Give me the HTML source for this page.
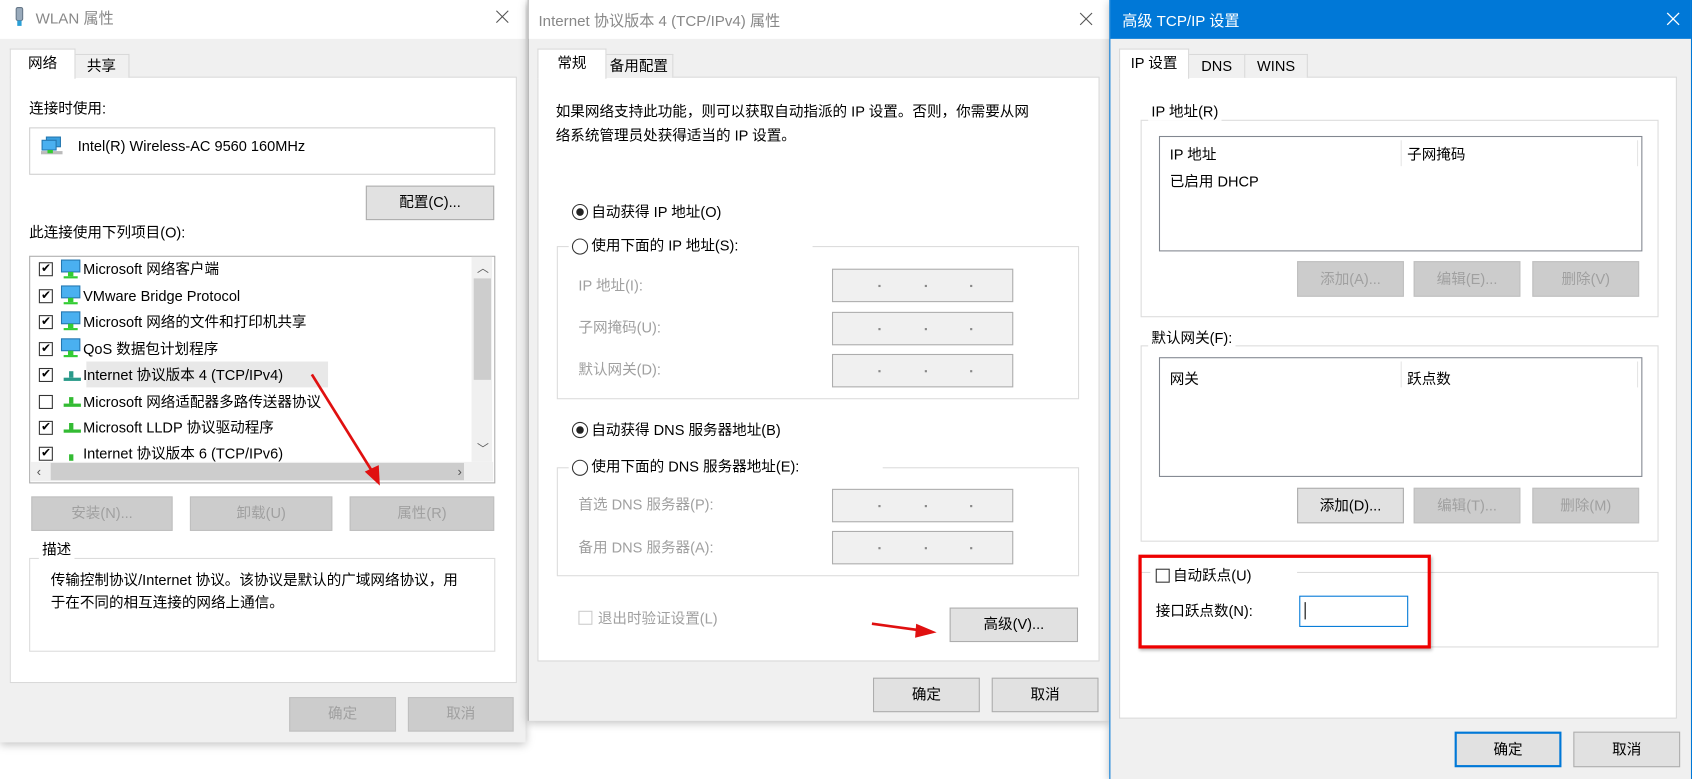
<!DOCTYPE html>
<html><head><meta charset="utf-8">
<style>
html,body{margin:0;padding:0;background:#fff;width:1692px;height:779px;overflow:hidden}
#f{position:absolute;left:0;top:0;width:1568px;height:722px;transform:scale(1.0791);transform-origin:0 0;font-family:"Liberation Sans","Noto Sans CJK SC",sans-serif;font-size:13.5px;color:#000}
.a{position:absolute}
.t{position:absolute;white-space:nowrap;line-height:16px;margin-top:-8px}
.g{color:#a0a0a0}
.dlg{position:absolute;background:#f0f0f0;box-shadow:0 2px 8px rgba(0,0,0,.25)}
.tb{position:absolute;left:0;right:0;top:0;height:36px;background:#fff}
.panel{position:absolute;background:#fff;border:1px solid #d9d9d9}
.tab{position:absolute;background:#f0f0f0;border:1px solid #d9d9d9;border-bottom:none;text-align:center;line-height:22px}
.tab.s{background:#fff;z-index:2;line-height:26px}
.btn{position:absolute;background:#e1e1e1;border:1px solid #adadad;text-align:center;box-sizing:border-box}
.btn.d{background:#cccccc;border-color:#bfbfbf;color:#a0a0a0}
.fs{position:absolute;border:1px solid #dcdcdc}
.lg{position:absolute;background:#fff;padding:0 3px;white-space:nowrap;line-height:16px}
.box{position:absolute;background:#fff;border:1px solid #828790}
.ip{position:absolute;background:#f0f0f0;border:1px solid #adadad;box-sizing:border-box}
.ip i{position:absolute;top:14px;width:2px;height:2px;background:#888}
.cb{position:absolute;width:11px;height:11px;border:1px solid #333;background:#fff}
.rd{position:absolute;width:13px;height:13px;border:1px solid #333;border-radius:50%;background:#fff}
.rd.on:after{content:"";position:absolute;left:3px;top:3px;width:7px;height:7px;border-radius:50%;background:#222}
.x{position:absolute}
</style></head><body><div id="f">

<!-- LEFT DIALOG -->
<div class="dlg" style="left:0;top:0;width:487px;height:688px">
 <div class="tb"></div>
 <svg class="a" style="left:13px;top:6px" width="10" height="20" viewBox="0 0 10 20"><rect x="2" y="1" width="6" height="12" rx="1.5" fill="#9ab" stroke="#678"/><rect x="3" y="13" width="4" height="5" fill="#2a9fd6"/></svg>
 <div class="t g" style="left:33px;top:17px;color:#888;font-size:14px">WLAN 属性</div>
 <svg class="x" style="left:459px;top:9px" width="13" height="13"><path d="M1 1L12 12M12 1L1 12" stroke="#555" stroke-width="1"/></svg>
 <div class="panel" style="left:9px;top:71px;width:468px;height:560px"></div>
 <div class="tab s" style="left:9px;top:45px;width:59px;height:27px">网络</div>
 <div class="tab" style="left:68px;top:50px;width:50px;height:21px">共享</div>
 <div class="t" style="left:27px;top:101px">连接时使用:</div>
 <div class="a" style="left:27px;top:118px;width:430px;height:42px;background:#fff;border:1px solid #d0d0d0"></div>
 <svg class="a" style="left:38px;top:126px" width="20" height="18" viewBox="0 0 20 18"><rect x="5" y="1" width="13" height="9" fill="#3aa0e0" stroke="#2477b0"/><rect x="1" y="4" width="13" height="9" fill="#4ab0f0" stroke="#2477b0"/><rect x="0" y="14" width="20" height="3" fill="#bbb"/><rect x="6" y="13" width="5" height="3" fill="#3c3"/></svg>
 <div class="t" style="left:72px;top:136px">Intel(R) Wireless-AC 9560 160MHz</div>
 <div class="btn" style="left:339px;top:172px;width:119px;height:32px;line-height:30px">配置(C)...</div>
 <div class="t" style="left:27px;top:216px">此连接使用下列项目(O):</div>
 <div class="box" style="left:27px;top:237px;width:430px;height:209px;border-color:#adadad"></div>
 <div class="a" style="left:80px;top:335px;width:224px;height:24px;background:#e8e8e8"></div>
 <div class="cb" style="left:36px;top:243px"></div><div class="t" style="left:38px;top:249px;font-size:11px">✔</div>
 <div class="cb" style="left:36px;top:268px"></div><div class="t" style="left:38px;top:274px;font-size:11px">✔</div>
 <div class="cb" style="left:36px;top:292px"></div><div class="t" style="left:38px;top:298px;font-size:11px">✔</div>
 <div class="cb" style="left:36px;top:317px"></div><div class="t" style="left:38px;top:323px;font-size:11px">✔</div>
 <div class="cb" style="left:36px;top:341px"></div><div class="t" style="left:38px;top:347px;font-size:11px">✔</div>
 <div class="cb" style="left:36px;top:366px"></div>
 <div class="cb" style="left:36px;top:390px"></div><div class="t" style="left:38px;top:396px;font-size:11px">✔</div>
 <div class="cb" style="left:36px;top:414px"></div><div class="t" style="left:38px;top:420px;font-size:11px">✔</div>
 <svg class="a" style="left:56px;top:240px" width="20" height="96" viewBox="0 0 20 96">
  <g id="mon"><rect x="1" y="1" width="17" height="11" fill="#4ab0f0" stroke="#2477b0"/><rect x="7" y="12" width="5" height="4" fill="#3c3"/><rect x="3" y="16" width="13" height="2" fill="#3c3"/></g>
  <use href="#mon" y="24"/><use href="#mon" y="48"/><use href="#mon" y="73"/></svg>
 <svg class="a" style="left:58px;top:340px" width="18" height="90" viewBox="0 0 18 90">
  <rect x="6" y="4" width="4" height="6" fill="#2a9a8a"/><rect x="1" y="10" width="16" height="3" fill="#2a9a8a"/>
  <rect x="6" y="28" width="4" height="6" fill="#3b3"/><rect x="1" y="34" width="16" height="3" fill="#3b3"/>
  <rect x="6" y="52" width="4" height="6" fill="#3b3"/><rect x="1" y="58" width="16" height="3" fill="#3b3"/>
  <rect x="6" y="81" width="4" height="6" fill="#3b3"/></svg>
 <div class="t" style="left:77px;top:250px">Microsoft 网络客户端</div>
 <div class="t" style="left:77px;top:275px">VMware Bridge Protocol</div>
 <div class="t" style="left:77px;top:299px">Microsoft 网络的文件和打印机共享</div>
 <div class="t" style="left:77px;top:324px">QoS 数据包计划程序</div>
 <div class="t" style="left:77px;top:348px">Internet 协议版本 4 (TCP/IPv4)</div>
 <div class="t" style="left:77px;top:373px">Microsoft 网络适配器多路传送器协议</div>
 <div class="t" style="left:77px;top:397px">Microsoft LLDP 协议驱动程序</div>
 <div class="t" style="left:77px;top:421px">Internet 协议版本 6 (TCP/IPv6)</div>
 <div class="a" style="left:437px;top:238px;width:19px;height:190px;background:#f0f0f0"></div>
 <div class="a" style="left:439px;top:258px;width:16px;height:94px;background:#cdcdcd"></div>
 <div class="t" style="left:442px;top:249px;font-size:11px;color:#555">︿</div>
 <div class="t" style="left:442px;top:417px;font-size:11px;color:#555">﹀</div>
 <div class="a" style="left:28px;top:428px;width:429px;height:18px;background:#f0f0f0"></div>
 <div class="a" style="left:47px;top:429px;width:383px;height:16px;background:#cdcdcd"></div>
 <div class="t" style="left:34px;top:437px;font-size:12px;color:#555">‹</div>
 <div class="t" style="left:424px;top:437px;font-size:12px;color:#555">›</div>
 <div class="btn d" style="left:29px;top:460px;width:131px;height:32px;line-height:30px">安装(N)...</div>
 <div class="btn d" style="left:176px;top:460px;width:132px;height:32px;line-height:30px">卸载(U)</div>
 <div class="btn d" style="left:324px;top:460px;width:134px;height:32px;line-height:30px">属性(R)</div>
 <div class="fs" style="left:27px;top:517px;width:430px;height:85px"></div>
 <div class="lg" style="left:36px;top:502px">描述</div>
 <div class="t" style="left:47px;top:538px">传输控制协议/Internet 协议。该协议是默认的广域网络协议，用</div>
 <div class="t" style="left:47px;top:559px">于在不同的相互连接的网络上通信。</div>
 <div class="btn d" style="left:268px;top:646px;width:99px;height:32px;line-height:30px">确定</div>
 <div class="btn d" style="left:378px;top:646px;width:98px;height:32px;line-height:30px">取消</div>
</div>

<!-- MIDDLE DIALOG -->
<div class="dlg" style="left:489px;top:0;width:538px;height:668px;border-left:1px solid #aaa">
 <div class="tb"></div>
 <div class="t" style="left:9px;top:19px;color:#888;font-size:14px">Internet 协议版本 4 (TCP/IPv4) 属性</div>
 <svg class="x" style="left:510px;top:11px" width="13" height="13"><path d="M1 1L12 12M12 1L1 12" stroke="#555" stroke-width="1"/></svg>
 <div class="panel" style="left:8px;top:71px;width:519px;height:540px"></div>
 <div class="tab s" style="left:8px;top:45px;width:62px;height:27px">常规</div>
 <div class="tab" style="left:70px;top:50px;width:62px;height:21px">备用配置</div>
 <div class="t" style="left:25px;top:104px">如果网络支持此功能，则可以获取自动指派的 IP 设置。否则，你需要从网</div>
 <div class="t" style="left:25px;top:126px">络系统管理员处获得适当的 IP 设置。</div>
 <div class="rd on" style="left:40px;top:189px"></div>
 <div class="t" style="left:58px;top:197px">自动获得 IP 地址(O)</div>
 <div class="fs" style="left:26px;top:228px;width:482px;height:140px"></div>
 <div class="lg" style="left:37px;top:219px;padding-left:3px;width:220px;height:18px"></div>
 <div class="rd" style="left:40px;top:221px"></div>
 <div class="t" style="left:58px;top:228px">使用下面的 IP 地址(S):</div>
 <div class="t g" style="left:46px;top:265px">IP 地址(I):</div>
 <div class="t g" style="left:46px;top:304px">子网掩码(U):</div>
 <div class="t g" style="left:46px;top:343px">默认网关(D):</div>
 <div class="ip" style="left:281px;top:249px;width:168px;height:31px"><i style="left:42px"></i><i style="left:85px"></i><i style="left:127px"></i></div>
 <div class="ip" style="left:281px;top:289px;width:168px;height:31px"><i style="left:42px"></i><i style="left:85px"></i><i style="left:127px"></i></div>
 <div class="ip" style="left:281px;top:328px;width:168px;height:31px"><i style="left:42px"></i><i style="left:85px"></i><i style="left:127px"></i></div>
 <div class="rd on" style="left:40px;top:391px"></div>
 <div class="t" style="left:58px;top:399px">自动获得 DNS 服务器地址(B)</div>
 <div class="fs" style="left:26px;top:433px;width:482px;height:99px"></div>
 <div class="lg" style="left:37px;top:424px;width:285px;height:18px"></div>
 <div class="rd" style="left:40px;top:426px"></div>
 <div class="t" style="left:58px;top:433px">使用下面的 DNS 服务器地址(E):</div>
 <div class="t g" style="left:46px;top:468px">首选 DNS 服务器(P):</div>
 <div class="t g" style="left:46px;top:508px">备用 DNS 服务器(A):</div>
 <div class="ip" style="left:281px;top:453px;width:168px;height:31px"><i style="left:42px"></i><i style="left:85px"></i><i style="left:127px"></i></div>
 <div class="ip" style="left:281px;top:492px;width:168px;height:31px"><i style="left:42px"></i><i style="left:85px"></i><i style="left:127px"></i></div>
 <div class="cb" style="left:46px;top:566px;border-color:#ccc"></div>
 <div class="t g" style="left:64px;top:574px">退出时验证设置(L)</div>
 <div class="btn" style="left:390px;top:563px;width:119px;height:32px;line-height:30px">高级(V)...</div>
 <div class="btn" style="left:319px;top:628px;width:99px;height:32px;line-height:30px">确定</div>
 <div class="btn" style="left:429px;top:628px;width:99px;height:32px;line-height:30px">取消</div>
</div>

<!-- RIGHT DIALOG -->
<div class="dlg" style="left:1028px;top:0;width:538px;height:722px;border-left:1px solid #0078d7;border-right:1px solid #0078d7">
 <div class="tb" style="background:#0078d7"></div>
 <div class="t" style="left:11px;top:19px;color:#fff;font-size:14px">高级 TCP/IP 设置</div>
 <svg class="x" style="left:515px;top:11px" width="13" height="13"><path d="M1 1L12 12M12 1L1 12" stroke="#fff" stroke-width="1.2"/></svg>
 <div class="panel" style="left:8px;top:71px;width:515px;height:593px"></div>
 <div class="tab s" style="left:8px;top:45px;width:63px;height:27px">IP 设置</div>
 <div class="tab" style="left:71px;top:50px;width:53px;height:21px">DNS</div>
 <div class="tab" style="left:124px;top:50px;width:57px;height:21px">WINS</div>
 <div class="fs" style="left:28px;top:111px;width:478px;height:181px"></div>
 <div class="lg" style="left:35px;top:96px">IP 地址(R)</div>
 <div class="box" style="left:45px;top:126px;width:446px;height:105px"></div>
 <div class="a" style="left:269px;top:130px;width:1px;height:24px;background:#e5e5e5"></div>
 <div class="a" style="left:488px;top:130px;width:1px;height:24px;background:#e5e5e5"></div>
 <div class="t" style="left:55px;top:144px">IP 地址</div>
 <div class="t" style="left:275px;top:144px">子网掩码</div>
 <div class="t" style="left:55px;top:169px">已启用 DHCP</div>
 <div class="btn d" style="left:173px;top:242px;width:99px;height:33px;line-height:31px">添加(A)...</div>
 <div class="btn d" style="left:281px;top:242px;width:99px;height:33px;line-height:31px">编辑(E)...</div>
 <div class="btn d" style="left:391px;top:242px;width:99px;height:33px;line-height:31px">删除(V)</div>
 <div class="fs" style="left:28px;top:320px;width:478px;height:180px"></div>
 <div class="lg" style="left:35px;top:306px">默认网关(F):</div>
 <div class="box" style="left:45px;top:331px;width:446px;height:109px"></div>
 <div class="a" style="left:269px;top:335px;width:1px;height:24px;background:#e5e5e5"></div>
 <div class="a" style="left:488px;top:335px;width:1px;height:24px;background:#e5e5e5"></div>
 <div class="t" style="left:55px;top:352px">网关</div>
 <div class="t" style="left:275px;top:352px">跃点数</div>
 <div class="btn" style="left:173px;top:452px;width:99px;height:33px;line-height:31px">添加(D)...</div>
 <div class="btn d" style="left:281px;top:452px;width:99px;height:33px;line-height:31px">编辑(T)...</div>
 <div class="btn d" style="left:391px;top:452px;width:99px;height:33px;line-height:31px">删除(M)</div>
 <div class="fs" style="left:28px;top:530px;width:478px;height:68px"></div>
 <div class="lg" style="left:37px;top:525px;width:130px;height:16px"></div>
 <div class="cb" style="left:42px;top:527px"></div>
 <div class="t" style="left:58px;top:534px">自动跃点(U)</div>
 <div class="t" style="left:42px;top:567px">接口跃点数(N):</div>
 <div class="a" style="left:175px;top:552px;width:101px;height:29px;background:#fff;border:1px solid #0078d7;box-sizing:border-box"></div>
 <div class="a" style="left:180px;top:558px;width:1px;height:16px;background:#000"></div>
 <div class="a" style="left:26px;top:514px;width:271px;height:87px;border:3px solid #ee0000;box-sizing:border-box;box-shadow:1px 2px 3px rgba(0,0,0,.3)"></div>
 <div class="btn" style="left:319px;top:678px;width:99px;height:33px;line-height:29px;border:2px solid #0078d7">确定</div>
 <div class="btn" style="left:429px;top:678px;width:99px;height:33px;line-height:31px">取消</div>
</div>

<!-- red arrows -->
<svg class="a" style="left:0;top:0" width="1568" height="722">
 <line x1="289" y1="347" x2="345" y2="437" stroke="#e01010" stroke-width="2.5"/>
 <polygon points="352,450 338,437 351,431" fill="#e01010"/>
 <line x1="808" y1="578" x2="852" y2="584" stroke="#e01010" stroke-width="2.5"/>
 <polygon points="868,586 849,578 848,591" fill="#e01010"/>
</svg>
</div></body></html>
